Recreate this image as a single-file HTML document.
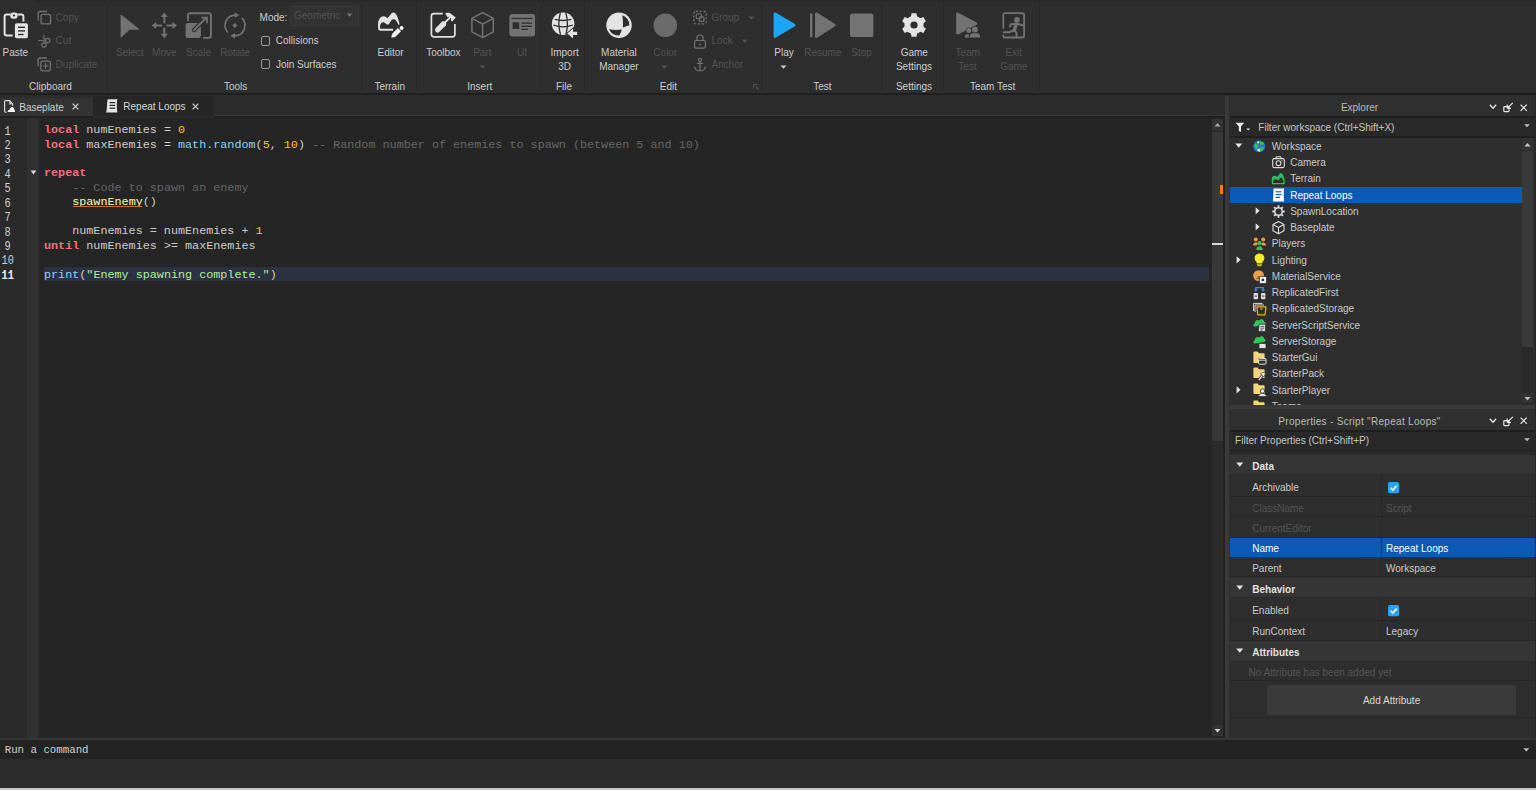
<!DOCTYPE html>
<html><head><meta charset="utf-8">
<style>
*{margin:0;padding:0;box-sizing:border-box}
html,body{width:1536px;height:790px;overflow:hidden;background:#2e2e2e;font-family:"Liberation Sans",sans-serif;font-size:10px;color:#d6d6d6}
.a{position:absolute}
.t{position:absolute;white-space:nowrap;line-height:12px;height:12px}
svg{position:absolute;overflow:visible}
.code{position:absolute;left:44px;font-family:"Liberation Mono",monospace;font-size:11.75px;line-height:14.43px;height:14.43px;white-space:pre;color:#cccccc}
.ln{position:absolute;left:0;width:10.8px;text-align:right;font-family:"Liberation Mono",monospace;font-size:12px;transform:scaleX(0.86);transform-origin:100% 50%;line-height:14.43px;height:14.43px;color:#d0d0d0}
.kw{color:#f86d7c;font-weight:bold}
.nm{color:#ffc600}
.bi{color:#84d6f7}
.st{color:#adf195}
.cm{color:#666666}
</style></head><body>

<div class="a" style="left:0px;top:0px;width:1536px;height:93px;background:#2e2e2e;"></div>
<div class="a" style="left:0px;top:93px;width:1536px;height:2px;background:#1f1f1f;"></div>
<div class="a" style="left:34px;top:0px;width:1502px;height:1.6px;background:#292929;"></div>
<div class="a" style="left:107px;top:4px;width:1px;height:86px;background:#262626;"></div>
<div class="a" style="left:361px;top:4px;width:1px;height:86px;background:#262626;"></div>
<div class="a" style="left:416px;top:4px;width:1px;height:86px;background:#262626;"></div>
<div class="a" style="left:541px;top:4px;width:1px;height:86px;background:#262626;"></div>
<div class="a" style="left:584px;top:4px;width:1px;height:86px;background:#262626;"></div>
<div class="a" style="left:761px;top:4px;width:1px;height:86px;background:#262626;"></div>
<div class="a" style="left:881px;top:4px;width:1px;height:86px;background:#262626;"></div>
<div class="a" style="left:943px;top:4px;width:1px;height:86px;background:#262626;"></div>
<div class="a" style="left:1039px;top:4px;width:1px;height:86px;background:#262626;"></div>
<div class="t" style="left:-49.5px;width:200px;text-align:center;top:80.90px;color:#cdcdcd;">Clipboard</div>
<div class="t" style="left:135.6px;width:200px;text-align:center;top:80.90px;color:#cdcdcd;">Tools</div>
<div class="t" style="left:289.7px;width:200px;text-align:center;top:80.90px;color:#cdcdcd;">Terrain</div>
<div class="t" style="left:379.8px;width:200px;text-align:center;top:80.90px;color:#cdcdcd;">Insert</div>
<div class="t" style="left:464px;width:200px;text-align:center;top:80.90px;color:#cdcdcd;">File</div>
<div class="t" style="left:568.4px;width:200px;text-align:center;top:80.90px;color:#cdcdcd;">Edit</div>
<div class="t" style="left:722.4px;width:200px;text-align:center;top:80.90px;color:#cdcdcd;">Test</div>
<div class="t" style="left:814px;width:200px;text-align:center;top:80.90px;color:#cdcdcd;">Settings</div>
<div class="t" style="left:892.6px;width:200px;text-align:center;top:80.90px;color:#cdcdcd;">Team Test</div>
<svg style="left:0px;top:0px" width="40" height="45" viewBox="0 0 40 45">
<path d="M10.5 14.6 H6.6 a2 2 0 0 0 -2 2 V33.6 a2 2 0 0 0 2 2 H12.7" fill="none" stroke="#e3e3e3" stroke-width="2"/>
<path d="M17.4 14.6 H21.4 a2 2 0 0 1 2 2 V21.5" fill="none" stroke="#e3e3e3" stroke-width="2"/>
<rect x="10.2" y="12.4" width="7.5" height="6.4" rx="3" fill="#e3e3e3"/>
<circle cx="14" cy="15.5" r="1.1" fill="#2e2e2e"/>
<rect x="14.9" y="23.2" width="13" height="15" rx="1.8" fill="#e3e3e3"/>
<rect x="18" y="26.6" width="7" height="1.4" fill="#2e2e2e"/>
<rect x="18" y="30.2" width="7" height="1.4" fill="#2e2e2e"/>
<rect x="18" y="33.8" width="5.5" height="1.4" fill="#2e2e2e"/>
</svg>
<div class="t" style="left:-84.7px;width:200px;text-align:center;top:47.00px;color:#cdcdcd;">Paste</div>
<svg style="left:30px;top:5px" width="30" height="70" viewBox="0 0 30 70">
<path d="M8.2 15.5 V8.5 a2 2 0 0 1 2 -2 H17" fill="none" stroke="#737373" stroke-width="1.3"/>
<rect x="11" y="9.3" width="9.6" height="9.6" rx="2" fill="none" stroke="#737373" stroke-width="1.3"/>
<path d="M14 29.8 V37 M8 35.5 H14" stroke="#737373" stroke-width="1.2"/>
<circle cx="17.7" cy="35.5" r="2.2" fill="none" stroke="#737373" stroke-width="1.2"/>
<circle cx="14" cy="40" r="2.2" fill="none" stroke="#737373" stroke-width="1.2"/>
<path d="M8.2 61 V55 a2 2 0 0 1 2 -2 H17" fill="none" stroke="#737373" stroke-width="1.3"/>
<rect x="10.8" y="56.2" width="9.6" height="9.6" rx="2" fill="none" stroke="#737373" stroke-width="1.3"/>
<path d="M15.6 58 V64 M12.6 61 H18.6" stroke="#737373" stroke-width="1.2"/>
</svg>
<div class="t" style="left:55.6px;top:12.00px;color:#535353;">Copy</div>
<div class="t" style="left:55.6px;top:35.20px;color:#535353;">Cut</div>
<div class="t" style="left:55.6px;top:58.90px;color:#535353;">Duplicate</div>
<svg style="left:110px;top:0px" width="150" height="45" viewBox="0 0 150 45">
<path d="M11 15 L29 29.3 L19.5 29.3 L11 37.3 Z" fill="#737373" stroke="#737373" stroke-width="0.8" stroke-linejoin="round"/>
<g stroke="#737373" stroke-width="2" fill="none">
<path d="M54.3 15 V23.3 M54.3 27.7 V36 M43 25.5 H52.1 M56.5 25.5 H65.5"/>
</g>
<g fill="#737373">
<path d="M54.3 12.6 L50.8 17 H57.8 Z"/><path d="M54.3 38.2 L50.8 33.8 H57.8 Z"/>
<path d="M41.7 25.5 L46.2 22 V29 Z"/><path d="M67 25.5 L62.5 22 V29 Z"/>
</g>
<path d="M78 21 V15.5 a2.3 2.3 0 0 1 2.3 -2.3 H98.6 a2.3 2.3 0 0 1 2.3 2.3 V35.6 a2.3 2.3 0 0 1 -2.3 2.3 H93" fill="none" stroke="#737373" stroke-width="1.9"/>
<rect x="75.6" y="23" width="15.3" height="15" rx="2.2" fill="#737373"/>
<path d="M84 30 L96.5 17.5" stroke="#2e2e2e" stroke-width="4.2" stroke-linecap="round"/>
<path d="M84 30 L96 18" stroke="#737373" stroke-width="1.8" stroke-linecap="round"/>
<path d="M91.3 17.6 H97 V23.3" fill="none" stroke="#737373" stroke-width="1.8"/>
<path d="M117.9 32.5 A10.3 10.3 0 0 1 125.2 15.1" fill="none" stroke="#737373" stroke-width="1.7"/>
<path d="M131.7 17.9 A10.3 10.3 0 0 1 124.4 35.7" fill="none" stroke="#737373" stroke-width="1.7"/>
<path d="M124.6 12.4 L129.3 15.1 L124.6 17.8 Z" fill="#737373"/>
<path d="M125 33 L120.3 35.7 L125 38.4 Z" fill="#737373"/>
<path d="M124.8 22.9 L127.3 25.4 L124.8 27.9 L122.3 25.4 Z" fill="#737373"/>
</svg>
<div class="t" style="left:30px;width:200px;text-align:center;top:46.90px;color:#535353;">Select</div>
<div class="t" style="left:64.30000000000001px;width:200px;text-align:center;top:46.90px;color:#535353;">Move</div>
<div class="t" style="left:98.5px;width:200px;text-align:center;top:46.90px;color:#535353;">Scale</div>
<div class="t" style="left:135px;width:200px;text-align:center;top:46.90px;color:#535353;">Rotate</div>
<div class="t" style="left:259.6px;top:11.90px;color:#cdcdcd;">Mode:</div>
<div class="a" style="left:290px;top:5.5px;width:69px;height:20px;background:#323232;border:1px solid #393939;"></div>
<div class="t" style="left:294px;top:9.90px;color:#535353;">Geometric</div>
<svg style="left:346px;top:13px" width="8" height="5" viewBox="0 0 8 5"><path d="M0.5 0.5 H6.5 L3.5 3.8 Z" fill="#737373"/></svg>
<div class="a" style="left:260.5px;top:36px;width:9.5px;height:9.5px;background:transparent;border:1.3px solid #9a9a9a;border-radius:2px;"></div>
<div class="t" style="left:275.8px;top:35.10px;color:#cdcdcd;">Collisions</div>
<div class="a" style="left:260.5px;top:59.2px;width:9.5px;height:9.5px;background:transparent;border:1.3px solid #9a9a9a;border-radius:2px;"></div>
<div class="t" style="left:276px;top:58.60px;color:#cdcdcd;">Join Surfaces</div>
<svg style="left:370px;top:5px" width="40" height="40" viewBox="0 0 40 40">
<path d="M9.1 16.5 V23.3 a1.5 1.5 0 0 0 1.5 1.5 H23.1" fill="none" stroke="#e3e3e3" stroke-width="2"/>
<path d="M8.3 19 C8.3 14 10.5 11.2 13.6 11.2 C15.8 11.2 16.5 12.9 17.6 12.9 C19 12.9 20.8 7.6 23.4 7.6 C26.2 7.6 28.3 13 29.6 19.4 L28.2 19.8 C27 16 25.6 14.2 23.3 14.2 C20.8 14.2 19.6 19.7 17.7 19.7 C16 19.7 15.4 17.2 13.4 17.2 C11.4 17.2 10.3 19 9.9 20.5 L8.3 20.5 Z" fill="#e3e3e3"/>
<path d="M21.3 32.8 L22 28.9 L27.9 23 L31.1 26.2 L25.2 32.1 Z" fill="#f2f2f2"/>
<circle cx="31.6" cy="23.1" r="2" fill="#f2f2f2"/>
</svg>
<div class="t" style="left:290.6px;width:200px;text-align:center;top:46.90px;color:#cdcdcd;">Editor</div>
<svg style="left:420px;top:5px" width="125" height="40" viewBox="0 0 125 40">
<path d="M22.8 8.6 H13.9 a2.5 2.5 0 0 0 -2.5 2.5 V29.4 a2.5 2.5 0 0 0 2.5 2.5 H32.4 a2.5 2.5 0 0 0 2.5 -2.5 V18.9" fill="none" stroke="#e3e3e3" stroke-width="1.7"/>
<path d="M17.6 24.9 L23.6 18.9" stroke="#e3e3e3" stroke-width="5.2" stroke-linecap="round"/>
<path d="M22 20.5 L24.4 18.1" stroke="#e3e3e3" stroke-width="5.2"/>
<path d="M23.5 19 L30.5 12" stroke="#e3e3e3" stroke-width="1.8"/>
<path d="M25.2 8.3 C27 7.4 29.5 7.6 31.5 9.2 L35.8 12.4 L32.2 16.6 L30.6 15.1 L31.3 13.7 L29 11.5 L27.6 12.4 Z" fill="#e3e3e3"/>
<g fill="none" stroke="#737373" stroke-width="1.5" stroke-linejoin="round">
<path d="M62.6 7.6 L73.3 13.3 V26.8 L62.6 32.6 L51.9 26.8 V13.3 Z"/>
<path d="M51.9 13.3 L62.6 19.2 L73.3 13.3 M62.6 19.2 V32.6"/>
</g>
<rect x="89.6" y="9.2" width="25.4" height="22" rx="2.5" fill="#737373"/>
<rect x="91.6" y="13.8" width="21.4" height="15.4" fill="#2e2e2e"/>
<rect x="91.6" y="13.8" width="21.4" height="15.4" fill="#737373" opacity="0"/>
<rect x="93.3" y="17.8" width="6" height="5.6" fill="#2e2e2e"/>
<rect x="91.6" y="13.8" width="21.4" height="15.4" fill="none"/>
</svg>
<svg style="left:509px;top:14px" width="27" height="23" viewBox="0 0 27 23">
<rect x="0.6" y="0.2" width="25.4" height="22" rx="2.6" fill="#737373"/>
<rect x="2.4" y="3.8" width="21.8" height="0.01" fill="#2e2e2e"/>
<path d="M2.5 4.5 H24" stroke="#2e2e2e" stroke-width="1.2"/>
<rect x="3.6" y="8.3" width="6.6" height="6.6" fill="#2e2e2e"/>
<rect x="12.5" y="8.5" width="10.4" height="1.3" fill="#2e2e2e"/>
<rect x="12.5" y="11.6" width="10.4" height="1.3" fill="#2e2e2e"/>
<rect x="12.5" y="14.7" width="6.4" height="1.3" fill="#2e2e2e"/>
</svg>
<div class="t" style="left:343.4px;width:200px;text-align:center;top:46.60px;color:#cdcdcd;">Toolbox</div>
<div class="t" style="left:382.3px;width:200px;text-align:center;top:46.60px;color:#535353;">Part</div>
<svg style="left:478.5px;top:64.5px" width="8" height="5" viewBox="0 0 8 5"><path d="M0.5 0.5 H6.5 L3.5 3.8 Z" fill="#535353"/></svg>
<div class="t" style="left:422.1px;width:200px;text-align:center;top:46.60px;color:#535353;">UI</div>
<svg style="left:545px;top:5px" width="40" height="40" viewBox="0 0 40 40">
<circle cx="18.1" cy="18.7" r="11.3" fill="#e3e3e3"/>
<g fill="none" stroke="#2e2e2e" stroke-width="1.3">
<path d="M9.8 14.4 Q18 16.6 26.4 14.4 M8.2 20 Q18 23.6 28 20"/>
<path d="M15.3 8 Q12.3 18.7 15.5 29.6 M20.9 8 Q23.9 18.7 20.9 29.6"/>
</g>
<path d="M22.3 28.4 L28 23.4 V26.7 H32.2 V30.1 H28 V33.4 Z" fill="#e3e3e3" stroke="#2e2e2e" stroke-width="1.6" paint-order="stroke"/>
</svg>
<div class="t" style="left:464.6px;width:200px;text-align:center;top:46.60px;color:#cdcdcd;">Import</div>
<div class="t" style="left:464.6px;width:200px;text-align:center;top:61.40px;color:#cdcdcd;">3D</div>
<svg style="left:590px;top:5px" width="100" height="40" viewBox="0 0 100 40">
<circle cx="29" cy="20.2" r="12.7" fill="#e3e3e3"/>
<path d="M32.2 10.2 C33 14 33.1 18.5 32.9 22.4 L39.4 20.3 A10.4 10.4 0 0 0 32.2 10.2 Z" fill="#2e2e2e"/>
<path d="M19 24.1 C23 25.4 27.5 25.3 31.8 24.6 C31.2 27 30.4 29 29 30.5 A10.4 10.4 0 0 1 19 24.1 Z" fill="#2e2e2e"/>
<circle cx="75.3" cy="20.3" r="11.8" fill="#6b6b6b"/>
</svg>
<div class="t" style="left:518.9px;width:200px;text-align:center;top:46.60px;color:#cdcdcd;">Material</div>
<div class="t" style="left:518.9px;width:200px;text-align:center;top:61.10px;color:#cdcdcd;">Manager</div>
<div class="t" style="left:565.3px;width:200px;text-align:center;top:46.60px;color:#535353;">Color</div>
<svg style="left:661.3px;top:64.5px" width="8" height="5" viewBox="0 0 8 5"><path d="M0.5 0.5 H6.5 L3.5 3.8 Z" fill="#535353"/></svg>
<svg style="left:690px;top:5px" width="30" height="70" viewBox="0 0 30 70">
<rect x="3.8" y="6.4" width="12.4" height="12.4" rx="2" fill="none" stroke="#737373" stroke-width="1.2" stroke-dasharray="2.2 1.6"/>
<rect x="6.3" y="8.8" width="5" height="5" rx="1" fill="none" stroke="#737373" stroke-width="1.1"/>
<rect x="9.3" y="11.8" width="4.6" height="4.6" rx="1" fill="none" stroke="#737373" stroke-width="1.1"/>
<path d="M7 35.5 V33 a3 3 0 0 1 6 0 V35.5" fill="none" stroke="#737373" stroke-width="1.2"/>
<rect x="4.6" y="35.5" width="10.8" height="7.6" rx="1.3" fill="none" stroke="#737373" stroke-width="1.2"/>
<circle cx="10" cy="39.3" r="0.9" fill="#737373"/>
<circle cx="10" cy="54.8" r="1.6" fill="none" stroke="#737373" stroke-width="1.1"/>
<path d="M10 56.5 V66 M7 58.4 H13 M4.5 61.5 C5 65 7.5 66 10 66 C12.5 66 15 65 15.5 61.5" fill="none" stroke="#737373" stroke-width="1.2"/>
</svg>
<div class="t" style="left:711.4px;top:11.90px;color:#535353;">Group</div>
<svg style="left:747.5px;top:15.5px" width="8" height="5" viewBox="0 0 8 5"><path d="M0.5 0.5 H6.5 L3.5 3.8 Z" fill="#535353"/></svg>
<div class="t" style="left:711.4px;top:35.20px;color:#535353;">Lock</div>
<svg style="left:740.5px;top:38.8px" width="8" height="5" viewBox="0 0 8 5"><path d="M0.5 0.5 H6.5 L3.5 3.8 Z" fill="#535353"/></svg>
<div class="t" style="left:711.4px;top:58.90px;color:#535353;">Anchor</div>
<svg style="left:752.5px;top:84px" width="6" height="6" viewBox="0 0 6 6"><path d="M0.5 0.5 H4.5 M0.5 0.5 V4.5" stroke="#535353" stroke-width="0.9" fill="none"/><path d="M2.2 2.2 L5 5 M3 5 H5 V3" stroke="#535353" stroke-width="0.9" fill="none"/></svg>
<svg style="left:765px;top:5px" width="120" height="40" viewBox="0 0 120 40">
<path d="M8.6 9 C8.6 7.6 9.8 7.1 10.9 7.8 L29.6 18.8 C30.8 19.5 30.8 20.9 29.6 21.6 L10.9 32.6 C9.8 33.3 8.6 32.7 8.6 31.4 Z" fill="#1ba5f5"/>
<rect x="45" y="8.2" width="2.4" height="24" rx="1" fill="#737373"/>
<path d="M50 9 C50 7.6 51.2 7.1 52.3 7.8 L69.7 18.8 C70.9 19.5 70.9 20.9 69.7 21.6 L52.3 32.6 C51.2 33.3 50 32.7 50 31.4 Z" fill="#737373"/>
<rect x="85" y="8.4" width="23.4" height="23.6" rx="2.6" fill="#737373"/>
</svg>
<div class="t" style="left:684.1px;width:200px;text-align:center;top:46.60px;color:#cdcdcd;">Play</div>
<svg style="left:780.3px;top:64.6px" width="8" height="5" viewBox="0 0 8 5"><path d="M0.5 0.5 H6.5 L3.5 3.8 Z" fill="#cdcdcd"/></svg>
<div class="t" style="left:722.8px;width:200px;text-align:center;top:46.60px;color:#535353;">Resume</div>
<div class="t" style="left:761.6px;width:200px;text-align:center;top:46.60px;color:#535353;">Stop</div>
<svg style="left:895px;top:5px" width="40" height="40" viewBox="0 0 40 40">
<g transform="translate(19,20)">
<path d="M-2.4,-11.8 H2.4 L3.1,-8.6 C4.3,-8.2 5.4,-7.6 6.3,-6.8 L9.4,-7.9 L11.8,-3.8 L9.4,-1.6 C9.6,-0.5 9.6,0.5 9.4,1.6 L11.8,3.8 L9.4,7.9 L6.3,6.8 C5.4,7.6 4.3,8.2 3.1,8.6 L2.4,11.8 H-2.4 L-3.1,8.6 C-4.3,8.2 -5.4,7.6 -6.3,6.8 L-9.4,7.9 L-11.8,3.8 L-9.4,1.6 C-9.6,0.5 -9.6,-0.5 -9.4,-1.6 L-11.8,-3.8 L-9.4,-7.9 L-6.3,-6.8 C-5.4,-7.6 -4.3,-8.2 -3.1,-8.6 Z" fill="#e3e3e3"/>
<circle r="3.6" fill="#2e2e2e"/>
</g>
</svg>
<div class="t" style="left:814.3px;width:200px;text-align:center;top:46.60px;color:#cdcdcd;">Game</div>
<div class="t" style="left:814px;width:200px;text-align:center;top:61.10px;color:#cdcdcd;">Settings</div>
<svg style="left:950px;top:5px" width="90" height="40" viewBox="0 0 90 40">
<path d="M6.1 9.3 C6.1 7.8 7.4 7.2 8.6 7.9 L26.2 17.2 C27.6 18 27.6 19.2 26.2 20 L8.6 29.2 C7.4 29.8 6.1 29.3 6.1 27.8 Z" fill="#737373"/>
<g stroke="#2e2e2e" stroke-width="1.1" fill="#737373" paint-order="stroke">
<path d="M14.8 32.6 C14.8 30.2 15.6 29.2 17.2 29.2 H18.8 V32.6 Z"/>
<circle cx="18.8" cy="25.6" r="2.5"/>
<path d="M19.6 32.6 C19.6 29.6 20.8 28.2 23 28.2 H27 C29 28.2 30.2 29.6 30.2 32.6 Z"/>
<circle cx="24.9" cy="24.5" r="3"/>
</g>
<path d="M53.3 23.8 V10.1 a2 2 0 0 1 2 -2 H72.1 a2 2 0 0 1 2 2 V30.5 a2 2 0 0 1 -2 2 H55.3 a2 2 0 0 1 -2 -2 V29.7" fill="none" stroke="#737373" stroke-width="1.8"/>
<circle cx="67" cy="14.8" r="2.8" fill="#737373"/>
<path d="M66.2 19 L64.3 25.2" stroke="#737373" stroke-width="3.4" stroke-linecap="round"/>
<path d="M65.5 18.8 L69 19.3 L73.8 20.6 M65.5 18.8 L60.8 19.2 L59.8 22.2 M64.4 25 L59.5 27.2 L53 27.3 M64.6 25 L66.5 28 V32.5" fill="none" stroke="#737373" stroke-width="2" stroke-linejoin="round"/>
</svg>
<div class="t" style="left:867.7px;width:200px;text-align:center;top:46.60px;color:#535353;">Team</div>
<div class="t" style="left:867.5px;width:200px;text-align:center;top:61.10px;color:#535353;">Test</div>
<div class="t" style="left:913.8px;width:200px;text-align:center;top:46.60px;color:#535353;">Exit</div>
<div class="t" style="left:913.8px;width:200px;text-align:center;top:61.10px;color:#535353;">Game</div>
<div class="a" style="left:0px;top:95px;width:1225px;height:19.5px;background:#2c2c2c;"></div>
<div class="a" style="left:0px;top:97.9px;width:93.4px;height:17px;background:#333333;"></div>
<div class="a" style="left:0px;top:114.5px;width:1225px;height:2px;background:#353535;"></div>
<div class="a" style="left:93.4px;top:95.5px;width:119.4px;height:21px;background:#262626;"></div>
<div class="a" style="left:0px;top:116.4px;width:1225px;height:2px;background:#212121;"></div>
<div class="a" style="left:93.4px;top:116.4px;width:119.4px;height:1.6px;background:#2a2a2a;"></div>
<svg style="left:3px;top:97px" width="14" height="20" viewBox="0 0 14 20">
<path d="M3.6 15.2 H2.8 a1.2 1.2 0 0 1 -1.2 -1.2 V4.8 a1.2 1.2 0 0 1 1.2 -1.2 H6.6 L9.7 6.9 V8.8" fill="none" stroke="#dcdcdc" stroke-width="1.15"/>
<path d="M6.2 3.7 L9.6 7.4 H6.4 Z" fill="#cfcfcf"/>
<path d="M4.6 15.1 C4.6 13.5 5.5 12.7 6.6 12.7 C7 11 8 10.1 9.2 10.1 C10.5 10.1 11.2 11.3 11.3 12.6 C11.9 13.2 12 14 12 15.1 Z" fill="#f0f0f0" stroke="#333" stroke-width="0.8" paint-order="stroke"/>
</svg>
<div class="t" style="left:19.3px;top:101.80px;color:#cfcfcf;">Baseplate</div>
<svg style="left:71.5px;top:103.3px" width="7" height="7" viewBox="0 0 7 7"><path d="M0.6 0.6 L6.4 6.4 M6.4 0.6 L0.6 6.4" stroke="#d8d8d8" stroke-width="1.15"/></svg>
<svg style="left:104.5px;top:98px" width="14" height="16" viewBox="0 0 14 16">
<path d="M2.6 1.2 H12.4 C11.7 3 11.7 11 12.4 14.6 H1.2 C2 12.6 2 3.5 2.6 1.2 Z" fill="#e4e4e4"/>
<rect x="4.6" y="4" width="5.6" height="1.2" fill="#252525"/>
<rect x="4.6" y="6.8" width="5.6" height="1.2" fill="#252525"/>
<rect x="4.6" y="9.6" width="5.6" height="1.2" fill="#252525"/>
</svg>
<div class="t" style="left:123.3px;top:100.90px;color:#d8d8d8;">Repeat Loops</div>
<svg style="left:191.7px;top:102.9px" width="7" height="7" viewBox="0 0 7 7"><path d="M0.6 0.6 L6.4 6.4 M6.4 0.6 L0.6 6.4" stroke="#d8d8d8" stroke-width="1.15"/></svg>
<div class="a" style="left:0px;top:118.4px;width:1225px;height:619.6px;background:#252525;"></div>
<div class="a" style="left:0px;top:118.4px;width:26.6px;height:619.6px;background:#2a2a2a;"></div>
<div class="a" style="left:26.6px;top:118.4px;width:12.4px;height:619.6px;background:#303030;"></div>
<div class="a" style="left:44px;top:267.4px;width:1165px;height:13.8px;background:#2d3242;"></div>
<div class="code" style="top:123.20px"><span class="kw">local</span> numEnemies = <span class="nm">0</span></div>
<div class="ln" style="top:124.50px;">1</div>
<div class="code" style="top:137.63px"><span class="kw">local</span> maxEnemies = <span class="bi">math.random</span>(<span class="nm">5</span>, <span class="nm">10</span>) <span class="cm">-- Random number of enemies to spawn (between 5 and 10)</span></div>
<div class="ln" style="top:138.93px;">2</div>
<div class="code" style="top:152.06px"></div>
<div class="ln" style="top:153.36px;">3</div>
<div class="code" style="top:166.49px"><span class="kw">repeat</span></div>
<div class="ln" style="top:167.79px;">4</div>
<div class="code" style="top:180.92px">    <span class="cm">-- Code to spawn an enemy</span></div>
<div class="ln" style="top:182.22px;">5</div>
<div class="code" style="top:195.35px">    <span style="color:#fdfbac">spawnEnemy</span>()</div>
<div class="ln" style="top:196.65px;">6</div>
<div class="code" style="top:209.78px"></div>
<div class="ln" style="top:211.08px;">7</div>
<div class="code" style="top:224.21px">    numEnemies = numEnemies + <span class="nm">1</span></div>
<div class="ln" style="top:225.51px;">8</div>
<div class="code" style="top:238.64px"><span class="kw">until</span> numEnemies &gt;= maxEnemies</div>
<div class="ln" style="top:239.94px;">9</div>
<div class="code" style="top:253.07px"></div>
<div class="ln" style="top:254.37px;">10</div>
<div class="code" style="top:267.50px"><span class="bi">print</span>(<span class="st">"Enemy spawning complete."</span>)</div>
<div class="ln" style="top:268.80px;font-weight:bold;color:#f0f0f0;">11</div>
<div class="a" style="left:72.9px;top:206.1px;width:69.6px;height:1.1px;background:#c8691e;"></div>
<svg style="left:30px;top:170.49px" width="8" height="6" viewBox="0 0 8 6"><path d="M0.6 0.6 H6.4 L3.5 4.6 Z" fill="#d8d8d8"/></svg>
<div class="a" style="left:1212px;top:119px;width:11px;height:606px;background:#2b2b2b;"></div>
<div class="a" style="left:1212px;top:119px;width:11px;height:12px;background:#333333;"></div>
<svg style="left:1213.5px;top:121.5px" width="8" height="6" viewBox="0 0 8 6"><path d="M0.5 4.5 H6.5 L3.5 1 Z" fill="#a8a8a8"/></svg>
<div class="a" style="left:1212px;top:132px;width:11px;height:309.2px;background:#383838;"></div>
<div class="a" style="left:1212px;top:725px;width:11px;height:10.5px;background:#333333;"></div>
<svg style="left:1214px;top:727.5px" width="8" height="6" viewBox="0 0 8 6"><path d="M0.5 1 H6.5 L3.5 4.5 Z" fill="#d0d0d0"/></svg>
<div class="a" style="left:1220px;top:184.7px;width:3.3px;height:9.7px;background:#ff7a00;"></div>
<div class="a" style="left:1212px;top:243px;width:11px;height:2.4px;background:#d8d8d8;"></div>
<div class="a" style="left:1223px;top:117px;width:2px;height:621px;background:#222222;"></div>
<div class="a" style="left:1225px;top:95.5px;width:4px;height:643px;background:#3a3a3a;"></div>
<div class="a" style="left:1229px;top:95.5px;width:307px;height:310px;background:#2e2e2e;"></div>
<div class="a" style="left:1229.5px;top:96.6px;width:306px;height:20px;background:#2f2f2f;"></div>
<div class="t" style="left:1259.5px;width:200px;text-align:center;top:101.80px;color:#bdbdbd;">Explorer</div>
<svg style="left:1488.5px;top:104.4px" width="9" height="6" viewBox="0 0 9 6"><path d="M0.8 0.8 L4 4.2 L7.2 0.8" fill="none" stroke="#e8e8e8" stroke-width="1.3"/></svg>
<svg style="left:1503px;top:102.4px" width="11" height="11" viewBox="0 0 11 11"><rect x="0.8" y="4.6" width="5.2" height="5" rx="0.8" fill="none" stroke="#e8e8e8" stroke-width="1.2"/><path d="M4.2 6.4 L9.8 0.8 M4.2 6.4 V2.6 M4.2 6.4 H8" fill="none" stroke="#e8e8e8" stroke-width="1.2"/></svg>
<svg style="left:1519.8px;top:103.9px" width="8" height="8" viewBox="0 0 8 8"><path d="M0.6 0.6 L6.8 6.8 M6.8 0.6 L0.6 6.8" stroke="#e8e8e8" stroke-width="1.2"/></svg>
<div class="a" style="left:1229.5px;top:116.4px;width:306px;height:2px;background:#1f1f1f;"></div>
<div class="a" style="left:1229.5px;top:118.4px;width:306px;height:17.4px;background:#292929;"></div>
<div class="a" style="left:1229.5px;top:135.8px;width:306px;height:1.8px;background:#1f1f1f;"></div>
<svg style="left:1235px;top:122px" width="18" height="12" viewBox="0 0 18 12"><path d="M0.6 0.8 H9.2 L6 4.4 V10 L3.8 9 V4.4 Z" fill="#e8e8e8"/><path d="M11.2 6.6 H15.2 L13.2 8.6 Z" fill="#e8e8e8"/></svg>
<div class="t" style="left:1258.3px;top:121.60px;color:#c4c4c4;">Filter workspace (Ctrl+Shift+X)</div>
<svg style="left:1523.5px;top:124px" width="6" height="4" viewBox="0 0 6 4"><path d="M0.2 0.2 H5.8 L3 3.2 Z" fill="#bdbdbd"/></svg>
<div class="a" style="left:1522px;top:138px;width:11px;height:266px;background:#2a2a2a;"></div>
<div class="a" style="left:1522px;top:138px;width:11px;height:11.7px;background:#333333;"></div>
<svg style="left:1524px;top:141.5px" width="8" height="6" viewBox="0 0 8 6"><path d="M0.5 4.5 H6.5 L3.5 1 Z" fill="#c8c8c8"/></svg>
<div class="a" style="left:1522px;top:151px;width:11px;height:195.5px;background:#3a3a3a;"></div>
<div class="a" style="left:1522px;top:392.5px;width:11px;height:10.5px;background:#333333;"></div>
<svg style="left:1524px;top:395.5px" width="8" height="6" viewBox="0 0 8 6"><path d="M0.5 1 H6.5 L3.5 4.5 Z" fill="#bdbdbd"/></svg>
<div class="a" style="left:1229.5px;top:137.6px;width:292.5px;height:267.4px;overflow:hidden">
<svg style="left:5.4px;top:5.375px" width="8" height="6" viewBox="0 0 8 6"><path d="M0.3 0.6 H7.2 L3.75 4.8 Z" fill="#e4e4e4"/></svg>
<svg style="left:23.8px;top:2.075px" width="13" height="13" viewBox="0 0 13 13"><circle cx="6.2" cy="6.2" r="6" fill="#2f6fd6"/><path d="M1.5 4.5 C3 3.5 4.5 4 5 5.5 C5.5 7 4 8 3.5 9.5 C2 8.5 1 6.5 1.5 4.5 Z M7 2 C8.5 1.5 10.5 2.5 11 4 C10 5 8.5 4.5 7.5 5.5 C7 4.5 6.5 3 7 2 Z M6.5 8 C8 7 10 7.5 11.2 7.5 C10.5 10 8.5 11.5 6.5 11.6 C6 10.5 6 9 6.5 8 Z" fill="#2cc84d"/><path d="M5 1 C6 1.5 6.5 2.5 6 3.5 L4 3 Z" fill="#e8f0ff"/><path d="M4 9.6 L6.5 8.5 L7 11.8 C5.5 11.8 4.5 11 4 9.6 Z" fill="#e8f0ff"/></svg>
<div class="t" style="left:42.3px;top:3.28px;color:#cacaca;">Workspace</div>
<svg style="left:42.2px;top:18.325px" width="13" height="13" viewBox="0 0 13 13"><rect x="0.7" y="2.6" width="11.6" height="9" rx="1.5" fill="none" stroke="#dcdcdc" stroke-width="1.1"/><path d="M3.5 2.6 L4.5 0.8 H8.5 L9.5 2.6" fill="none" stroke="#dcdcdc" stroke-width="1.1"/><circle cx="6.5" cy="7.2" r="2.4" fill="none" stroke="#dcdcdc" stroke-width="1.1"/><circle cx="10" cy="4.8" r="0.6" fill="#dcdcdc"/></svg>
<div class="t" style="left:60.699999999999996px;top:19.52px;color:#cacaca;">Camera</div>
<svg style="left:42.2px;top:34.575px" width="13" height="13" viewBox="0 0 13 13"><path d="M-0.2 12.3 V6.6 C-0.2 5 1.2 3.8 2.6 3.8 C3.9 3.8 4.5 4.7 5.3 4.7 C6.3 4.7 7.2 1.1 8.8 1.1 C10.4 1.1 11.2 3.3 11.9 5.4 C12.3 6.4 12.6 7.1 12.6 8.1 V12.3 Z" fill="#27c15d"/><path d="M1.3 10.9 V8.6 C2 7.7 2.8 7.3 3.7 7.3 C4.8 7.3 5.3 8.3 6.3 8.3 C7.4 8.3 8 5.6 9 5.6 C10.1 5.6 10.7 7.1 11.2 8.7 V10.9 Z" fill="#2e2e2e"/></svg>
<div class="t" style="left:60.699999999999996px;top:35.77px;color:#cacaca;">Terrain</div>
<div class="a" style="left:0.5px;top:49.00px;width:292px;height:16.25px;background:#0b5bb5"></div>
<svg style="left:42.2px;top:50.825px" width="13" height="13" viewBox="0 0 13 13"><path d="M1.6 0.6 H12.2 C11.6 2.8 11.6 10 12.2 13.4 H0.8 C1.4 11.4 1.4 3 1.6 0.6 Z" fill="#ffffff"/><rect x="3.6" y="3.2" width="6" height="1.2" fill="#0b5bb5"/><rect x="3.6" y="6" width="6" height="1.2" fill="#0b5bb5"/><rect x="3.6" y="8.8" width="4.5" height="1.2" fill="#0b5bb5"/></svg>
<div class="t" style="left:60.699999999999996px;top:52.02px;color:#ffffff;">Repeat Loops</div>
<svg style="left:25.700000000000003px;top:69.375px" width="6" height="8" viewBox="0 0 6 8"><path d="M0.6 0.3 V7.4 L4.6 3.85 Z" fill="#e4e4e4"/></svg>
<svg style="left:42.2px;top:67.075px" width="13" height="13" viewBox="0 0 13 13"><g transform="translate(6.5,6.5)"><circle r="3.8" fill="none" stroke="#dcdcdc" stroke-width="1.6"/><path d="M0 -6.2 V-4 M0 6.2 V4 M-6.2 0 H-4 M6.2 0 H4 M-4.4 -4.4 L-2.8 -2.8 M4.4 4.4 L2.8 2.8 M-4.4 4.4 L-2.8 2.8 M4.4 -4.4 L2.8 -2.8" stroke="#dcdcdc" stroke-width="1.8"/></g></svg>
<div class="t" style="left:60.699999999999996px;top:68.27px;color:#cacaca;">SpawnLocation</div>
<svg style="left:25.700000000000003px;top:85.625px" width="6" height="8" viewBox="0 0 6 8"><path d="M0.6 0.3 V7.4 L4.6 3.85 Z" fill="#e4e4e4"/></svg>
<svg style="left:42.2px;top:83.325px" width="13" height="13" viewBox="0 0 13 13"><g fill="none" stroke="#dcdcdc" stroke-width="1.1" stroke-linejoin="round"><path d="M6.5 0.6 L12 3.6 V9.8 L6.5 12.8 L1 9.8 V3.6 Z"/><path d="M1 3.6 L6.5 6.6 L12 3.6 M6.5 6.6 V12.8"/></g></svg>
<div class="t" style="left:60.699999999999996px;top:84.52px;color:#cacaca;">Baseplate</div>
<svg style="left:23.8px;top:99.575px" width="13" height="13" viewBox="0 0 13 13"><circle cx="2.8" cy="2.6" r="2" fill="#f09a3e"/><circle cx="10.2" cy="2.6" r="2" fill="#f09a3e"/><path d="M0 8.5 C0 6.2 1.2 5.4 2.8 5.4 C4 5.4 4.6 6 4.8 6.6 L3.6 8.5 Z M13 8.5 C13 6.2 11.8 5.4 10.2 5.4 C9 5.4 8.4 6 8.2 6.6 L9.4 8.5 Z" fill="#f09a3e"/><circle cx="6.5" cy="6.2" r="2.1" fill="#2fc85a"/><path d="M3.3 13 C3.3 10.5 4.6 9.2 6.5 9.2 C8.4 9.2 9.7 10.5 9.7 13 Z" fill="#2fc85a"/></svg>
<div class="t" style="left:42.3px;top:100.77px;color:#cacaca;">Players</div>
<svg style="left:6.9px;top:118.125px" width="6" height="8" viewBox="0 0 6 8"><path d="M0.6 0.3 V7.4 L4.6 3.85 Z" fill="#e4e4e4"/></svg>
<svg style="left:23.8px;top:115.825px" width="13" height="13" viewBox="0 0 13 13"><path d="M6.5 0.4 C9.6 0.4 11.4 2.6 11.4 5 C11.4 7 10.2 8 9.4 9 V10 H3.6 V9 C2.8 8 1.6 7 1.6 5 C1.6 2.6 3.4 0.4 6.5 0.4 Z" fill="#f2ec2e"/><rect x="3.8" y="10.6" width="5.4" height="1" fill="#f2ec2e"/><rect x="4.4" y="12.2" width="4.2" height="1" fill="#f2ec2e"/></svg>
<div class="t" style="left:42.3px;top:117.02px;color:#cacaca;">Lighting</div>
<svg style="left:23.8px;top:132.07500000000002px" width="13" height="13" viewBox="0 0 13 13"><circle cx="5.6" cy="5.6" r="5.4" fill="#f0a04b"/><path d="M3 9 C4 6.5 6.5 5.5 9.5 6.5 L9 9.5 Z" fill="#2e2e2e" opacity="0.5"/><rect x="6.4" y="6.4" width="7" height="7" rx="1.2" fill="#ffffff" stroke="#2e2e2e" stroke-width="0.8"/><circle cx="9.9" cy="9.9" r="1.4" fill="#2e2e2e"/></svg>
<div class="t" style="left:42.3px;top:133.28px;color:#cacaca;">MaterialService</div>
<svg style="left:23.8px;top:148.32500000000002px" width="13" height="13" viewBox="0 0 13 13"><path d="M2.8 4.6 V1.6 H10.2 V4.6" fill="none" stroke="#3f87f5" stroke-width="1.2"/><path d="M0.8 3.4 L2.8 5.8 L4.8 3.4 Z M8.2 3.4 L10.2 5.8 L12.2 3.4 Z" fill="#3f87f5"/><rect x="0.6" y="7" width="4.4" height="6.2" rx="0.8" fill="#dcdcdc"/><rect x="8" y="7" width="4.4" height="6.2" rx="0.8" fill="#dcdcdc"/><path d="M1.6 10.1 H4 M9 10.1 H11.4" stroke="#2e2e2e" stroke-width="0.9"/></svg>
<div class="t" style="left:42.3px;top:149.53px;color:#cacaca;">ReplicatedFirst</div>
<svg style="left:23.8px;top:164.57500000000002px" width="13" height="13" viewBox="0 0 13 13"><path d="M0.6 9 V1.4 H9.5" fill="none" stroke="#dcdcdc" stroke-width="1"/><path d="M2 10 V3 H11" fill="none" stroke="#dcdcdc" stroke-width="1"/><path d="M3.8 4.8 H13 L12 12.8 H4.8 Z" fill="#2e2e2e" stroke="#f2b21d" stroke-width="1.2" stroke-linejoin="round"/><path d="M7 7 H9.6" stroke="#f2b21d" stroke-width="1"/></svg>
<div class="t" style="left:42.3px;top:165.78px;color:#cacaca;">ReplicatedStorage</div>
<svg style="left:23.8px;top:180.82500000000002px" width="13" height="13" viewBox="0 0 13 13"><path d="M1.6 8.4 C0 8.4 0 5.6 1.8 5.4 C1.6 2.6 4.4 1 6.4 2.6 C7.6 0.4 11 0.8 11.2 3.8 C12.8 4 13 6.6 11.4 7 Z" fill="#2fc85a"/><path d="M6.2 6.2 H12.6 C12.2 8 12.2 11.4 12.6 13.4 H5.4 C5.8 11.4 5.8 8 6.2 6.2 Z" fill="#e8e8e8" stroke="#2e2e2e" stroke-width="0.8"/><path d="M7.4 8.4 H11 M7.4 10.2 H11 M7.4 12 H10" stroke="#2e2e2e" stroke-width="0.8"/></svg>
<div class="t" style="left:42.3px;top:182.03px;color:#cacaca;">ServerScriptService</div>
<svg style="left:23.8px;top:197.07500000000002px" width="13" height="13" viewBox="0 0 13 13"><path d="M1.6 8.4 C0 8.4 0 5.6 1.8 5.4 C1.6 2.6 4.4 1 6.4 2.6 C7.6 0.4 11 0.8 11.2 3.8 C12.8 4 13 6.6 11.4 7 Z" fill="#2fc85a"/><rect x="6" y="8.4" width="7" height="5" rx="1" fill="#e8e8e8" stroke="#2e2e2e" stroke-width="0.8"/></svg>
<div class="t" style="left:42.3px;top:198.28px;color:#cacaca;">ServerStorage</div>
<svg style="left:23.8px;top:213.32500000000002px" width="13" height="13" viewBox="0 0 13 13"><path d="M0.4 1.6 a1 1 0 0 1 1 -1 H4.6 L6 2.2 H10.6 a1 1 0 0 1 1 1 V7 H5.2 V12 H1.4 a1 1 0 0 1 -1 -1 Z" fill="#f5d67a"/><rect x="5.6" y="7.4" width="7.4" height="5.8" rx="1" fill="#2e2e2e" stroke="#e8e8e8" stroke-width="1"/><path d="M5.8 9.2 H12.8" stroke="#e8e8e8" stroke-width="0.9"/></svg>
<div class="t" style="left:42.3px;top:214.53px;color:#cacaca;">StarterGui</div>
<svg style="left:23.8px;top:229.57500000000002px" width="13" height="13" viewBox="0 0 13 13"><path d="M0.4 1.6 a1 1 0 0 1 1 -1 H4.6 L6 2.2 H10.6 a1 1 0 0 1 1 1 V11 H1.4 a1 1 0 0 1 -1 -1 Z" fill="#f5d67a"/><path d="M5.8 13.2 L9.4 8.4" stroke="#2e2e2e" stroke-width="2.6"/><path d="M5.8 13.2 L9.4 8.4" stroke="#e8e8e8" stroke-width="1.2"/><path d="M7.6 6.4 L10 5.4 C11.4 5.4 12.4 6 13 7 L11.6 7.6 L11.6 9.4 L10.2 9.6 Z" fill="#e8e8e8" stroke="#2e2e2e" stroke-width="0.6"/></svg>
<div class="t" style="left:42.3px;top:230.78px;color:#cacaca;">StarterPack</div>
<svg style="left:6.9px;top:248.12500000000003px" width="6" height="8" viewBox="0 0 6 8"><path d="M0.6 0.3 V7.4 L4.6 3.85 Z" fill="#e4e4e4"/></svg>
<svg style="left:23.8px;top:245.82500000000002px" width="13" height="13" viewBox="0 0 13 13"><path d="M0.4 1.6 a1 1 0 0 1 1 -1 H4.6 L6 2.2 H10.6 a1 1 0 0 1 1 1 V11 H1.4 a1 1 0 0 1 -1 -1 Z" fill="#f5d67a"/><circle cx="9.5" cy="8" r="2.2" fill="#e8e8e8" stroke="#2e2e2e" stroke-width="0.8"/><path d="M5.6 13.6 C5.6 11.6 7.2 10.4 9.5 10.4 C11.8 10.4 13.4 11.6 13.4 13.6 Z" fill="#e8e8e8" stroke="#2e2e2e" stroke-width="0.8"/></svg>
<div class="t" style="left:42.3px;top:247.03px;color:#cacaca;">StarterPlayer</div>
<svg style="left:23.8px;top:262.075px" width="13" height="13" viewBox="0 0 13 13"><path d="M0.4 1.6 a1 1 0 0 1 1 -1 H4.6 L6 2.2 H10.6 a1 1 0 0 1 1 1 V11 H1.4 a1 1 0 0 1 -1 -1 Z" fill="#f5d67a"/></svg>
<div class="t" style="left:42.3px;top:263.28px;color:#cacaca;">Teams</div>
</div>
<div class="a" style="left:1229.5px;top:405px;width:306.5px;height:4.2px;background:#3a3a3a;"></div>
<div class="a" style="left:1229.5px;top:409.2px;width:306.5px;height:329px;background:#2e2e2e;"></div>
<div class="a" style="left:1229.5px;top:409.2px;width:306px;height:20.8px;background:#2f2f2f;"></div>
<div class="t" style="left:1259.5px;width:200px;text-align:center;top:415.90px;color:#bdbdbd;letter-spacing:0.3px;">Properties - Script &quot;Repeat Loops&quot;</div>
<svg style="left:1488.5px;top:417.6px" width="9" height="6" viewBox="0 0 9 6"><path d="M0.8 0.8 L4 4.2 L7.2 0.8" fill="none" stroke="#e8e8e8" stroke-width="1.3"/></svg>
<svg style="left:1503px;top:415.6px" width="11" height="11" viewBox="0 0 11 11"><rect x="0.8" y="4.6" width="5.2" height="5" rx="0.8" fill="none" stroke="#e8e8e8" stroke-width="1.2"/><path d="M4.2 6.4 L9.8 0.8 M4.2 6.4 V2.6 M4.2 6.4 H8" fill="none" stroke="#e8e8e8" stroke-width="1.2"/></svg>
<svg style="left:1519.8px;top:417.1px" width="8" height="8" viewBox="0 0 8 8"><path d="M0.6 0.6 L6.8 6.8 M6.8 0.6 L0.6 6.8" stroke="#e8e8e8" stroke-width="1.2"/></svg>
<div class="a" style="left:1229.5px;top:430px;width:306px;height:1.5px;background:#1f1f1f;"></div>
<div class="a" style="left:1229.5px;top:431.5px;width:306px;height:18.2px;background:#292929;"></div>
<div class="a" style="left:1229.5px;top:449.7px;width:306px;height:1.5px;background:#1f1f1f;"></div>
<div class="t" style="left:1235.1px;top:434.60px;color:#c4c4c4;">Filter Properties (Ctrl+Shift+P)</div>
<svg style="left:1523.5px;top:437.5px" width="6" height="4" viewBox="0 0 6 4"><path d="M0.2 0.2 H5.8 L3 3.2 Z" fill="#bdbdbd"/></svg>
<div class="a" style="left:1229.5px;top:451.2px;width:306px;height:3.4px;background:#2a2a2a;"></div>
<div class="a" style="left:1230.4px;top:454.6px;width:305px;height:20.19999999999999px;background:#353535;border-bottom:1px solid #2a2a2a;"></div>
<svg style="left:1235.6px;top:461.70000000000005px" width="8" height="6" viewBox="0 0 8 6"><path d="M0.3 0.6 H7.2 L3.75 4.8 Z" fill="#e4e4e4"/></svg>
<div class="t" style="left:1252.3px;top:460.70px;color:#e0e0e0;font-weight:bold;">Data</div>
<div class="a" style="left:1230.4px;top:474.8px;width:305px;height:22.19999999999999px;background:#2e2e2e;border-bottom:1px solid #262626;"></div>
<div class="a" style="left:1381.4px;top:474.8px;width:1px;height:22.19999999999999px;background:#262626;"></div>
<div class="t" style="left:1252.2px;top:481.50px;color:#cacaca;">Archivable</div>
<svg style="left:1388px;top:481.7px" width="11.5" height="11.5" viewBox="0 0 11.5 11.5"><rect x="0" y="0" width="11.2" height="11.2" rx="2" fill="#27a3f5"/><path d="M2.6 5.8 L4.8 8 L8.8 3.6" fill="none" stroke="#ffffff" stroke-width="1.6"/></svg>
<div class="a" style="left:1230.4px;top:497px;width:305px;height:20.299999999999955px;background:#2e2e2e;border-bottom:1px solid #262626;"></div>
<div class="a" style="left:1381.4px;top:497px;width:1px;height:20.299999999999955px;background:#262626;"></div>
<div class="t" style="left:1252.2px;top:502.75px;color:#545454;">ClassName</div>
<div class="t" style="left:1386px;top:502.75px;color:#545454;">Script</div>
<div class="a" style="left:1230.4px;top:517.3px;width:305px;height:20.40000000000009px;background:#2e2e2e;border-bottom:1px solid #262626;"></div>
<div class="a" style="left:1381.4px;top:517.3px;width:1px;height:20.40000000000009px;background:#262626;"></div>
<div class="t" style="left:1252.2px;top:523.10px;color:#545454;">CurrentEditor</div>
<div class="a" style="left:1230.4px;top:537.7px;width:305px;height:19.5px;background:#0b5bb5;"></div>
<div class="a" style="left:1381.4px;top:537.7px;width:1px;height:19.5px;background:#2e2e2e;"></div>
<div class="t" style="left:1252.2px;top:543.05px;color:#ffffff;">Name</div>
<div class="t" style="left:1386px;top:543.05px;color:#ffffff;">Repeat Loops</div>
<div class="a" style="left:1230.4px;top:557.2px;width:305px;height:20.299999999999955px;background:#2e2e2e;border-bottom:1px solid #262626;"></div>
<div class="a" style="left:1381.4px;top:557.2px;width:1px;height:20.299999999999955px;background:#262626;"></div>
<div class="t" style="left:1252.2px;top:562.95px;color:#cacaca;">Parent</div>
<div class="t" style="left:1386px;top:562.95px;color:#cacaca;">Workspace</div>
<div class="a" style="left:1230.4px;top:577.5px;width:305px;height:20.5px;background:#353535;border-bottom:1px solid #2a2a2a;"></div>
<svg style="left:1235.6px;top:584.75px" width="8" height="6" viewBox="0 0 8 6"><path d="M0.3 0.6 H7.2 L3.75 4.8 Z" fill="#e4e4e4"/></svg>
<div class="t" style="left:1252.3px;top:583.75px;color:#e0e0e0;font-weight:bold;">Behavior</div>
<div class="a" style="left:1230.4px;top:598px;width:305px;height:22.600000000000023px;background:#2e2e2e;border-bottom:1px solid #262626;"></div>
<div class="a" style="left:1381.4px;top:598px;width:1px;height:22.600000000000023px;background:#262626;"></div>
<div class="t" style="left:1252.2px;top:604.90px;color:#cacaca;">Enabled</div>
<svg style="left:1388px;top:605.0999999999999px" width="11.5" height="11.5" viewBox="0 0 11.5 11.5"><rect x="0" y="0" width="11.2" height="11.2" rx="2" fill="#27a3f5"/><path d="M2.6 5.8 L4.8 8 L8.8 3.6" fill="none" stroke="#ffffff" stroke-width="1.6"/></svg>
<div class="a" style="left:1230.4px;top:620.6px;width:305px;height:20.0px;background:#2e2e2e;border-bottom:1px solid #262626;"></div>
<div class="a" style="left:1381.4px;top:620.6px;width:1px;height:20.0px;background:#262626;"></div>
<div class="t" style="left:1252.2px;top:626.20px;color:#cacaca;">RunContext</div>
<div class="t" style="left:1386px;top:626.20px;color:#cacaca;">Legacy</div>
<div class="a" style="left:1230.4px;top:640.6px;width:305px;height:21.5px;background:#353535;border-bottom:1px solid #2a2a2a;"></div>
<svg style="left:1235.6px;top:648.35px" width="8" height="6" viewBox="0 0 8 6"><path d="M0.3 0.6 H7.2 L3.75 4.8 Z" fill="#e4e4e4"/></svg>
<div class="t" style="left:1252.3px;top:647.35px;color:#e0e0e0;font-weight:bold;">Attributes</div>
<div class="a" style="left:1230.4px;top:662.1px;width:305px;height:19.4px;background:#2e2e2e;border-bottom:1px solid #262626;"></div>
<div class="t" style="left:1248.6px;top:666.80px;color:#565656;">No Attribute has been added yet</div>
<div class="a" style="left:1230.4px;top:681.5px;width:305px;height:36px;background:#2e2e2e;border-bottom:1px solid #262626;"></div>
<div class="a" style="left:1267px;top:685.2px;width:249.3px;height:30.1px;background:#3a3a3a;border-radius:2px;"></div>
<div class="t" style="left:1291.6px;width:200px;text-align:center;top:694.80px;color:#d8d8d8;">Add Attribute</div>
<div class="a" style="left:1535px;top:96px;width:1px;height:642px;background:#262626;"></div>
<div class="a" style="left:0px;top:738px;width:1536px;height:2px;background:#353535;"></div>
<div class="a" style="left:0px;top:740px;width:1536px;height:18.8px;background:#232323;"></div>
<div class="a" style="left:4.7px;top:742.8px;font-family:'Liberation Mono',monospace;font-size:10.75px;line-height:14px;color:#d0d0d0;white-space:pre">Run a command</div>
<svg style="left:1522.5px;top:747.5px" width="7" height="5" viewBox="0 0 7 5"><path d="M0.3 0.3 H6.3 L3.3 3.5 Z" fill="#bdbdbd"/></svg>
<div class="a" style="left:0px;top:758.8px;width:1536px;height:29.2px;background:#2c2c2c;"></div>
<div class="a" style="left:0px;top:788px;width:1536px;height:2px;background:#c8c8c8;"></div>
</body></html>
